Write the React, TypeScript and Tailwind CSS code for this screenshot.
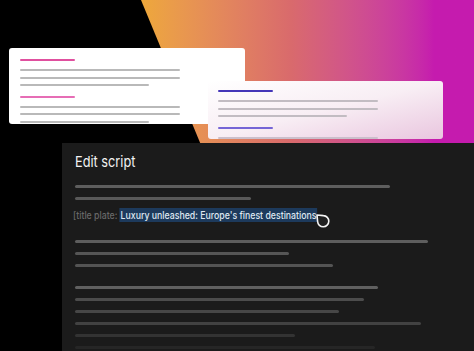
export default function App() {
  const panelLines: { w: number; mt: number; c: string }[] = [
    { w: 353, mt: 18, c: "bg-[#5e5e5e]" },
    { w: 214, mt: 9, c: "bg-[#565656]" },
    { w: 258, mt: 9, c: "bg-[#545454]" },
    { w: 303, mt: 19, c: "bg-[#606060]" },
    { w: 289, mt: 9, c: "bg-[#4c4c4c]" },
    { w: 264, mt: 9, c: "bg-[#474747]" },
    { w: 346, mt: 9, c: "bg-[#424242]" },
    { w: 220, mt: 9, c: "bg-[#333333]" },
    { w: 300, mt: 9, c: "bg-[#262626]" },
  ];

  return (
    <div className="relative w-[474px] h-[351px] overflow-hidden bg-black font-['Inter',sans-serif]">
      {/* gradient backdrop */}
      <div className="absolute left-[141px] top-0 w-[333px] h-[145px] bg-linear-to-r from-[#eea83a] via-[#d96a6c] via-45% to-[#c51bae] to-88% [clip-path:polygon(0_0,100%_0,100%_100%,60px_100%)]" />

      {/* card one */}
      <div className="absolute left-[9px] top-[48px] w-[236px] h-[76px] rounded-[3px] bg-white pl-[11px] pt-[11px] flex flex-col">
        <div className="h-[2px] w-[55px] rounded-full bg-[#e0509f]" />
        <div className="mt-[8px] h-[2px] w-[160px] rounded-full bg-[#b9b9b9]" />
        <div className="mt-[5.5px] h-[2px] w-[160px] rounded-full bg-[#b9b9b9]" />
        <div className="mt-[5.5px] h-[2px] w-[129px] rounded-full bg-[#b9b9b9]" />
        <div className="mt-[10px] h-[2px] w-[55px] rounded-full bg-[#e66db5]" />
        <div className="mt-[7.5px] h-[2px] w-[160px] rounded-full bg-[#b9b9b9]" />
        <div className="mt-[5.5px] h-[2px] w-[160px] rounded-full bg-[#b9b9b9]" />
        <div className="mt-[5.5px] h-[2px] w-[129px] rounded-full bg-[#b9b9b9]" />
      </div>

      {/* card two */}
      <div className="absolute left-[208px] top-[81px] w-[235px] h-[58px] overflow-hidden rounded-[3px] bg-linear-to-br from-white via-[#f8eef4] to-[#e9c6df] pl-[10px] pt-[9px] flex flex-col">
        <div className="h-[2px] w-[55px] rounded-full bg-[#4436b8]" />
        <div className="mt-[8px] h-[2px] w-[160px] rounded-full bg-[#c2bcc2]" />
        <div className="mt-[5.5px] h-[2px] w-[160px] rounded-full bg-[#c2bcc2]" />
        <div className="mt-[5.5px] h-[2px] w-[129px] rounded-full bg-[#c2bcc2]" />
        <div className="mt-[10px] h-[2px] w-[55px] rounded-full bg-[#7565d6]" />
        <div className="mt-[7.5px] h-[2px] w-[160px] rounded-full bg-[#cbbfcb]" />
      </div>

      {/* edit panel */}
      <div className="absolute left-[62px] top-[143px] right-0 bottom-0 bg-[#1b1b1b] pl-[13px] pt-[9px] flex flex-col">
        <div className="origin-left scale-x-[0.85] text-[15px] leading-[20px] text-[#f2f2f2]">Edit script</div>
        <div className="mt-[13px] h-[3px] w-[315px] rounded-full bg-[#5e5e5e]" />
        <div className="mt-[9px] h-[3px] w-[176px] rounded-full bg-[#595959]" />
        <div className="mt-[8px] -ml-[2px] flex h-[14px] origin-left scale-x-[0.875] items-center whitespace-nowrap text-[10px] font-medium">
          <span className="text-[#686868]">[title plate:&nbsp;</span>
          <span className="bg-[#1d3a5c] px-[1px] leading-[14px] text-[#dfe7f1]">
            Luxury unleashed: Europe's finest destinations
          </span>
        </div>
        {panelLines.map((l, i) => (
          <div
            key={i}
            className={`h-[3px] rounded-full ${l.c}`}
            style={{ width: l.w, marginTop: l.mt }}
          />
        ))}
        <svg
          className="absolute left-[253px] top-[70px]"
          width="16"
          height="16"
          viewBox="0 0 16 16"
        >
          <path
            d="M2 2 L8.5 2.6 A5.6 5.6 0 1 1 2.6 8.5 Z"
            fill="#202020"
            stroke="#f4f4f4"
            strokeWidth="1.6"
            strokeLinejoin="round"
          />
        </svg>
      </div>
    </div>
  );
}
